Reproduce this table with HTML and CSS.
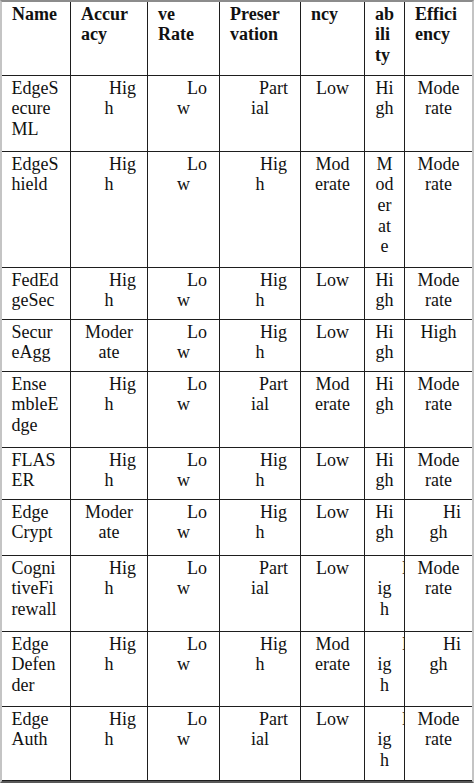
FILE: index.html
```html
<!DOCTYPE html>
<html lang="en">
<head>
<meta charset="utf-8">
<title>Comparison table</title>
<link rel="stylesheet" href="styles.css">
</head>
<body>
<div class="frame">
<table class="grid">
  <colgroup>
    <col class="c-name"><col class="c-acc"><col class="c-fpr"><col class="c-priv"><col class="c-lat"><col class="c-scal"><col class="c-eff">
  </colgroup>
  <thead>
    <tr class="h74">
      <th>Name</th>
      <th>Accur<br>acy</th>
      <th>ve<br>Rate</th>
      <th>Preser<br>vation</th>
      <th>ncy</th>
      <th>ab<br>ili<br>ty</th>
      <th>Effici<br>ency</th>
    </tr>
  </thead>
  <tbody>
    <tr class="h76">
      <td class="name">EdgeS<br>ecure<br>ML</td>
      <td><span class="lead">Hig</span>h</td>
      <td><span class="lead">Lo</span>w</td>
      <td><span class="lead">Part</span>ial</td>
      <td>Low</td>
      <td>Hi<br>gh</td>
      <td>Mode<br>rate</td>
    </tr>
    <tr class="h116">
      <td class="name">EdgeS<br>hield</td>
      <td><span class="lead">Hig</span>h</td>
      <td><span class="lead">Lo</span>w</td>
      <td><span class="lead">Hig</span>h</td>
      <td>Mod<br>erate</td>
      <td>M<br>od<br>er<br>at<br>e</td>
      <td>Mode<br>rate</td>
    </tr>
    <tr class="h52">
      <td class="name">FedEd<br>geSec</td>
      <td><span class="lead">Hig</span>h</td>
      <td><span class="lead">Lo</span>w</td>
      <td><span class="lead">Hig</span>h</td>
      <td>Low</td>
      <td>Hi<br>gh</td>
      <td>Mode<br>rate</td>
    </tr>
    <tr class="h52">
      <td class="name">Secur<br>eAgg</td>
      <td>Moder<br>ate</td>
      <td><span class="lead">Lo</span>w</td>
      <td><span class="lead">Hig</span>h</td>
      <td>Low</td>
      <td>Hi<br>gh</td>
      <td>High</td>
    </tr>
    <tr class="h76">
      <td class="name">Ense<br>mbleE<br>dge</td>
      <td><span class="lead">Hig</span>h</td>
      <td><span class="lead">Lo</span>w</td>
      <td><span class="lead">Part</span>ial</td>
      <td>Mod<br>erate</td>
      <td>Hi<br>gh</td>
      <td>Mode<br>rate</td>
    </tr>
    <tr class="h52">
      <td class="name">FLAS<br>ER</td>
      <td><span class="lead">Hig</span>h</td>
      <td><span class="lead">Lo</span>w</td>
      <td><span class="lead">Hig</span>h</td>
      <td>Low</td>
      <td>Hi<br>gh</td>
      <td>Mode<br>rate</td>
    </tr>
    <tr class="h56">
      <td class="name">Edge<br>Crypt</td>
      <td>Moder<br>ate</td>
      <td><span class="lead">Lo</span>w</td>
      <td><span class="lead">Hig</span>h</td>
      <td>Low</td>
      <td>Hi<br>gh</td>
      <td><span class="lead">Hi</span>gh</td>
    </tr>
    <tr class="h76">
      <td class="name">Cogni<br>tiveFi<br>rewall</td>
      <td><span class="lead">Hig</span>h</td>
      <td><span class="lead">Lo</span>w</td>
      <td><span class="lead">Part</span>ial</td>
      <td>Low</td>
      <td><span class="clip">H</span>ig<br>h</td>
      <td>Mode<br>rate</td>
    </tr>
    <tr class="h75">
      <td class="name">Edge<br>Defen<br>der</td>
      <td><span class="lead">Hig</span>h</td>
      <td><span class="lead">Lo</span>w</td>
      <td><span class="lead">Hig</span>h</td>
      <td>Mod<br>erate</td>
      <td><span class="clip">H</span>ig<br>h</td>
      <td><span class="lead">Hi</span>gh</td>
    </tr>
    <tr class="h74">
      <td class="name">Edge<br>Auth</td>
      <td><span class="lead">Hig</span>h</td>
      <td><span class="lead">Lo</span>w</td>
      <td><span class="lead">Part</span>ial</td>
      <td>Low</td>
      <td><span class="clip">H</span>ig<br>h</td>
      <td>Mode<br>rate</td>
    </tr>
  </tbody>
</table>
</div>
</body>
</html>
```

FILE: styles.css
```css
html, body {
  margin: 0;
  padding: 0;
  background: #ffffff;
}

.frame {
  width: 474px;
  height: 783px;
  box-sizing: border-box;
  border-top: 2px solid #8c8c8c;
  border-left: 2px solid #c4c4c4;
  border-right: 2px solid #c4c4c4;
  border-bottom: 2px solid #585858;
  background: #ffffff;
  overflow: hidden;
}

.grid {
  width: 470px;
  table-layout: fixed;
  border-collapse: separate;
  border-spacing: 0;
  font-family: "Liberation Serif", "Times New Roman", serif;
  font-size: 18px;
  line-height: 20.7px;
  color: #111111;
}

.c-name { width: 69px; }
.c-acc  { width: 77px; }
.c-fpr  { width: 72px; }
.c-priv { width: 81px; }
.c-lat  { width: 64px; }
.c-scal { width: 40px; }
.c-eff  { width: 67px; }

.grid th,
.grid td {
  box-sizing: border-box;
  padding: 1.5px 0 0 0;
  vertical-align: top;
  text-align: center;
  white-space: nowrap;
  overflow: hidden;
  border-right: 1px solid #1e1e1e;
  border-bottom: 1px solid #1e1e1e;
}

.grid th:last-child,
.grid td:last-child {
  border-right: none;
}

.grid th {
  font-weight: bold;
  text-align: left;
  padding-left: 10px;
}

.grid td.name {
  text-align: left;
  padding-left: 9.5px;
}

.lead {
  display: block;
  padding-left: 27px;
}

.clip {
  display: block;
  overflow: hidden;
  text-align: left;
  padding-left: 37px;
}

.h52  { height: 52px; }
.h56  { height: 56px; }
.h74  { height: 74px; }
.h75  { height: 75px; }
.h76  { height: 76px; }
.h116 { height: 116px; }
```
